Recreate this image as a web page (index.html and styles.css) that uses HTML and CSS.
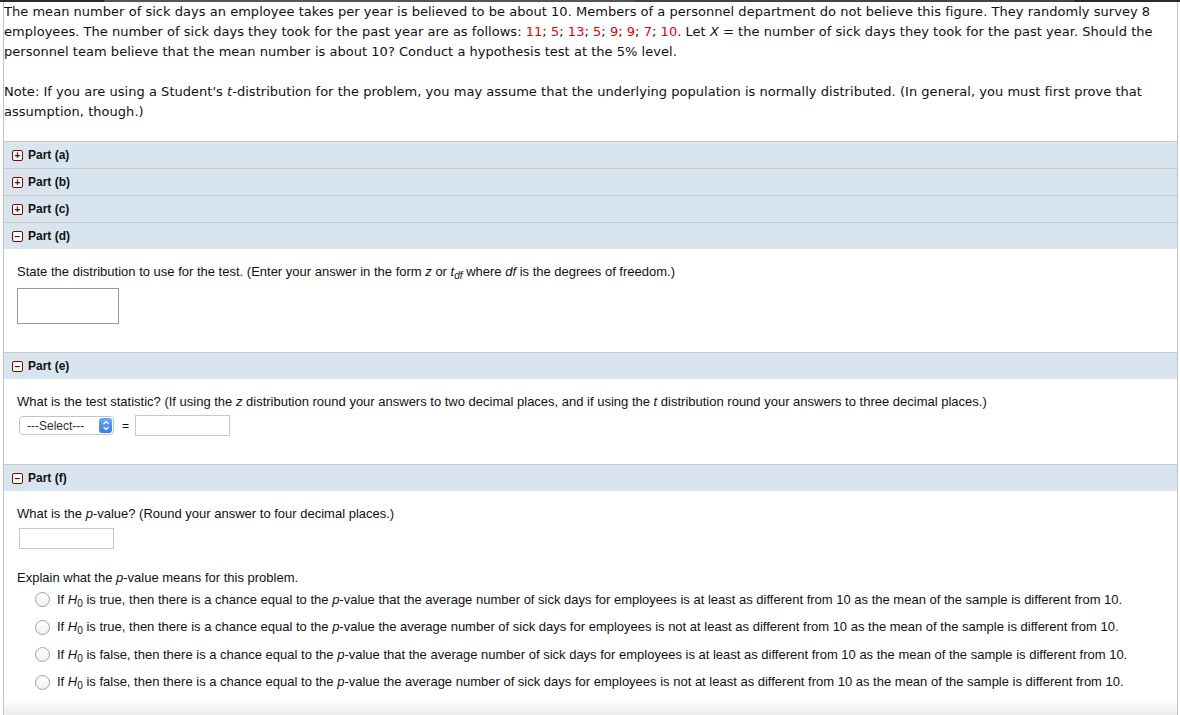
FILE: index.html
```html
<!DOCTYPE html>
<html lang="en">

<head>
    <meta charset="UTF-8">
    <title>Hypothesis Test - Sick Days</title>
    <link rel="stylesheet" href="styles.css">
</head>

<body>
    <div class="topbar">
        <span class="seg seg-a"></span>
        <span class="seg seg-b"></span>
        <span class="seg seg-c"></span>
    </div>
    <div class="page">
        <div class="question">
            The mean number of sick days an employee takes per year is believed to be about 10. Members of a personnel department do not believe this figure. They randomly survey 8 employees. The number of sick days they took for the past year are as follows: <span class="num">11</span>; <span class="num">5</span>; <span class="num">13</span>; <span class="num">5</span>; <span class="num">9</span>; <span class="num">9</span>; <span class="num">7</span>; <span class="num">10</span>. Let <i>X</i> = the number of sick days they took for the past year. Should the personnel team believe that the mean number is about 10? Conduct a hypothesis test at the 5% level.
            <br><br>
            Note: If you are using a Student's <i>t</i>-distribution for the problem, you may assume that the underlying population is normally distributed. (In general, you must first prove that assumption, though.)
        </div>

        <div class="part-head"><span class="toggle">+</span>Part (a)</div>
        <div class="part-head"><span class="toggle">+</span>Part (b)</div>
        <div class="part-head"><span class="toggle">+</span>Part (c)</div>
        <div class="part-head"><span class="toggle">&minus;</span>Part (d)</div>
        <div class="part-body part-d">
            <p>State the distribution to use for the test. (Enter your answer in the form <i>z</i> or <i>t<sub>df</sub></i> where <i>df</i> is the degrees of freedom.)</p>
            <div class="answer-box big"></div>
        </div>

        <div class="part-head"><span class="toggle">&minus;</span>Part (e)</div>
        <div class="part-body part-e">
            <p>What is the test statistic? (If using the <i>z</i> distribution round your answers to two decimal places, and if using the <i>t</i> distribution round your answers to three decimal places.)</p>
            <div class="stat-row">
                <div class="select">
                    <span class="select-text">---Select---</span>
                    <span class="stepper">
                        <svg width="8" height="11" viewBox="0 0 8 11">
                            <path d="M1.5 4 L4 1.5 L6.5 4 M1.5 7 L4 9.5 L6.5 7" fill="none" stroke="#fff" stroke-width="1.3" />
                        </svg>
                    </span>
                </div>
                <span class="eq">=</span>
                <div class="answer-box small wide"></div>
            </div>
        </div>

        <div class="part-head"><span class="toggle">&minus;</span>Part (f)</div>
        <div class="part-body part-f">
            <p>What is the <i>p</i>-value? (Round your answer to four decimal places.)</p>
            <div class="answer-box small"></div>
            <p class="explain">Explain what the <i>p</i>-value means for this problem.</p>
            <ul class="choices">
                <li><span class="radio"></span><span class="choice-text">If <i>H</i><sub>0</sub> is true, then there is a chance equal to the <i>p</i>-value that the average number of sick days for employees is at least as different from 10 as the mean of the sample is different from 10.</span></li>
                <li><span class="radio"></span><span class="choice-text">If <i>H</i><sub>0</sub> is true, then there is a chance equal to the <i>p</i>-value the average number of sick days for employees is not at least as different from 10 as the mean of the sample is different from 10.</span></li>
                <li><span class="radio"></span><span class="choice-text">If <i>H</i><sub>0</sub> is false, then there is a chance equal to the <i>p</i>-value that the average number of sick days for employees is at least as different from 10 as the mean of the sample is different from 10.</span></li>
                <li><span class="radio"></span><span class="choice-text">If <i>H</i><sub>0</sub> is false, then there is a chance equal to the <i>p</i>-value the average number of sick days for employees is not at least as different from 10 as the mean of the sample is different from 10.</span></li>
            </ul>
        </div>
        <div class="fade"></div>
    </div>
</body>

</html>
```

FILE: styles.css
```css
:root {
    --HeadBg: #d8e5ef;
    --Line: #cacaca;
    --Red: #ee0000;
}

body {
    margin: 0;
    padding: 0;
    background-color: #fff;
    color: #111;
    font-family: "Liberation Sans", Arial, sans-serif;
    font-size: 13px;
}

.topbar {
    height: 2px;
    background-color: #2a2a2a;
    display: flex;
}

.topbar .seg {
    display: block;
    height: 2px;
}

.seg-a {
    width: 104px;
}

.seg-b {
    width: 530px;
    background-color: #555;
}

.seg-c {
    width: 440px;
    background-color: #444;
}

.page {
    margin: 0 2px 0 3px;
    border-left: 1px solid #c4c4c4;
    border-right: 1px solid #c4c4c4;
    min-height: 713px;
    display: flex;
    flex-direction: column;
}

.question {
    font-family: "DejaVu Sans", Verdana, sans-serif;
    font-size: 13px;
    line-height: 20px;
    letter-spacing: 0.03px;
    padding: 0 0 19px 0;
    color: #111;
}

.question .num {
    color: var(--Red);
}

.part-head {
    background-color: var(--HeadBg);
    border-top: 1px solid var(--Line);
    height: 26px;
    display: flex;
    align-items: center;
    padding-left: 8px;
    font-weight: bold;
    font-size: 12px;
    color: #111;
}

.toggle {
    display: inline-flex;
    align-items: center;
    justify-content: center;
    width: 9px;
    height: 9px;
    border: 1px solid #8b0000;
    border-radius: 2px;
    background-color: #fff;
    color: #222;
    font-size: 10px;
    line-height: 9px;
    font-weight: bold;
    margin-right: 5px;
}

.part-body {
    padding: 0 13px;
}

.part-body p {
    margin: 0;
    line-height: 16px;
}

.part-d {
    padding-top: 15px;
    padding-bottom: 28px;
}

.part-d p {
    margin-bottom: 8px;
}

.answer-box {
    border: 1px solid #999;
    background-color: #fff;
    box-sizing: border-box;
}

.answer-box.big {
    width: 102px;
    height: 36px;
}

.answer-box.small {
    width: 95px;
    height: 21px;
    border-color: #c8c8c8;
    margin-left: 2px;
}

.answer-box.wide {
    margin-left: 0;
}

.part-e {
    padding-top: 15px;
    padding-bottom: 28px;
}

.part-e p {
    margin-bottom: 5px;
}

.stat-row {
    display: flex;
    align-items: center;
    margin-left: 2px;
}

.select {
    display: flex;
    align-items: center;
    justify-content: space-between;
    width: 95px;
    height: 19px;
    box-sizing: border-box;
    border: 1px solid #c6c6c6;
    border-radius: 4px;
    padding-left: 7px;
    padding-right: 1px;
    font-size: 12px;
    color: #333;
    background-color: #fff;
}

.stepper {
    display: flex;
    align-items: center;
    justify-content: center;
    width: 13px;
    height: 15px;
    border-radius: 3px;
    background: linear-gradient(#6aa8f7, #2f7cf0);
}

.eq {
    margin: 0 6px 0 8px;
    font-size: 12px;
}

.part-f {
    padding-top: 15px;
    flex: 1;
}

.part-f p {
    margin-bottom: 6px;
}

.part-f .explain {
    margin-top: 21px;
    margin-bottom: 0;
}

.choices {
    list-style: none;
    margin: 0;
    padding: 0 0 0 18px;
}

.choices li {
    display: flex;
    align-items: center;
    height: 27.5px;
    line-height: 16px;
}

.radio {
    display: inline-block;
    width: 13px;
    height: 13px;
    border: 1px solid #a0a0a0;
    border-radius: 50%;
    background: linear-gradient(#fff, #f0f0f0);
    margin-right: 7px;
    flex-shrink: 0;
}

.part-body i {
    font-style: italic;
}

sub {
    font-size: 10px;
    line-height: 0;
    vertical-align: -3px;
}

.fade {
    height: 16px;
    background: linear-gradient(#ffffff, #ececec);
}
```
